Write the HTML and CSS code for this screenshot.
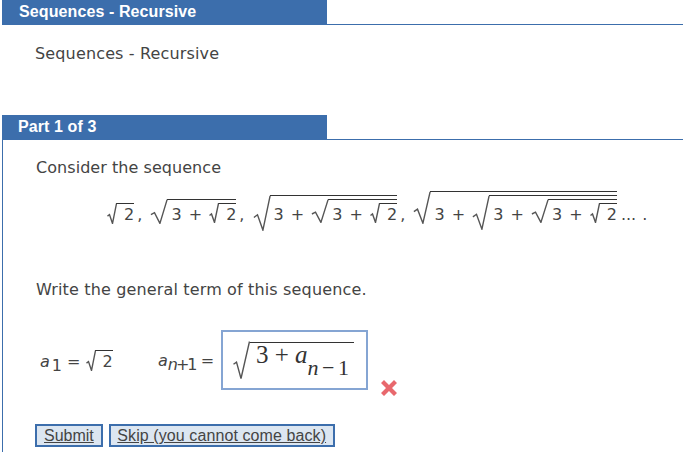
FILE: index.html
```html
<!DOCTYPE html>
<html lang="en">
<head>
    <meta charset="UTF-8">
    <title>Sequences - Recursive</title>
    <link rel="stylesheet" href="styles.css">
</head>
<body>
    <div class="tab-row"><div class="tab">Sequences - Recursive</div></div>
    <p class="intro">Sequences - Recursive</p>

    <div class="tab-row"><div class="tab tab-part">Part 1 of 3</div></div>
    <div class="part">
        <p class="prompt">Consider the sequence</p>

        <div class="sequence">
            <span class="sqrt"><svg class="surd" viewBox="0 0 10 20" preserveAspectRatio="none"><path d="M0.5 12.5 L2.5 11 L5.5 19.5 L9.5 0.5"/></svg><span class="rad">2</span></span><span class="comma">,</span>
            <span class="sqrt outer"><svg class="surd" viewBox="0 0 10 20" preserveAspectRatio="none"><path d="M0.5 12.5 L2.5 11 L5.5 19.5 L9.5 0.5"/></svg><span class="rad">3 + <span class="sqrt"><svg class="surd" viewBox="0 0 10 20" preserveAspectRatio="none"><path d="M0.5 12.5 L2.5 11 L5.5 19.5 L9.5 0.5"/></svg><span class="rad">2</span></span></span></span><span class="comma">,</span>
            <span class="sqrt outer deep"><svg class="surd" viewBox="0 0 10 20" preserveAspectRatio="none"><path d="M0.5 12.5 L2.5 11 L5.5 19.5 L9.5 0.5"/></svg><span class="rad">3 + <span class="sqrt outer"><svg class="surd" viewBox="0 0 10 20" preserveAspectRatio="none"><path d="M0.5 12.5 L2.5 11 L5.5 19.5 L9.5 0.5"/></svg><span class="rad">3 + <span class="sqrt"><svg class="surd" viewBox="0 0 10 20" preserveAspectRatio="none"><path d="M0.5 12.5 L2.5 11 L5.5 19.5 L9.5 0.5"/></svg><span class="rad">2</span></span></span></span></span></span><span class="comma">,</span>
            <span class="sqrt outer"><svg class="surd" viewBox="0 0 10 20" preserveAspectRatio="none"><path d="M0.5 12.5 L2.5 11 L5.5 19.5 L9.5 0.5"/></svg><span class="rad">3 + <span class="sqrt outer deep"><svg class="surd" viewBox="0 0 10 20" preserveAspectRatio="none"><path d="M0.5 12.5 L2.5 11 L5.5 19.5 L9.5 0.5"/></svg><span class="rad">3 + <span class="sqrt outer"><svg class="surd" viewBox="0 0 10 20" preserveAspectRatio="none"><path d="M0.5 12.5 L2.5 11 L5.5 19.5 L9.5 0.5"/></svg><span class="rad">3 + <span class="sqrt"><svg class="surd" viewBox="0 0 10 20" preserveAspectRatio="none"><path d="M0.5 12.5 L2.5 11 L5.5 19.5 L9.5 0.5"/></svg><span class="rad">2</span></span></span></span></span></span></span></span><span class="dots">... .</span>
        </div>

        <p class="prompt ask">Write the general term of this sequence.</p>

        <div class="answer-row">
            <span class="term"><i>a</i><sub>1</sub> = <span class="sqrt"><svg class="surd" viewBox="0 0 10 20" preserveAspectRatio="none"><path d="M0.5 12.5 L2.5 11 L5.5 19.5 L9.5 0.5"/></svg><span class="rad">2</span></span></span>
            <span class="term term-next"><i>a</i><sub class="sub-long"><i>n</i>+1</sub> =</span>
            <div class="answer-box">
                <span class="sqrt sqrt-big"><svg class="surd" viewBox="0 0 17 36" preserveAspectRatio="none"><path d="M0.5 22 L3.5 20 L8 35.5 L16.5 0.5"/></svg><span class="rad">3 + <i>a</i><sub><i>n</i>&#8722;1</sub></span></span>
            </div>
            <svg class="wrong" viewBox="0 0 18 18"><path d="M4 1 L9 6 L14 1 L17 4 L12 9 L17 14 L14 17 L9 12 L4 17 L1 14 L6 9 L1 4 Z"/></svg>
        </div>

        <div class="buttons">
            <button><u>Submit</u></button>
            <button class="skip"><u>Skip (you cannot come back)</u></button>
        </div>
    </div>
</body>
</html>
```

FILE: styles.css
```css
html, body {
    height: 452px;
    overflow: hidden;
}
body {
    margin: 0;
    padding-left: 2px;
    font-family: "DejaVu Sans", sans-serif;
    font-size: 16px;
    color: #444;
    background: #fff;
}
.tab-row {
    border-bottom: 1px solid #3c6eac;
}
.tab {
    width: 325px;
    height: 24px;
    box-sizing: border-box;
    padding-left: 17px;
    background: #3c6eac;
    color: #fff;
    font-family: "Liberation Sans", Arial, sans-serif;
    font-size: 16px;
    font-weight: bold;
    line-height: 23px;
    letter-spacing: 0.1px;
}
.tab-part {
    padding-left: 16px;
    line-height: 24px;
}
.intro {
    margin: 0;
    padding: 19px 0 0 33px;
    box-sizing: border-box;
    line-height: 20px;
    height: 90px;
    letter-spacing: 0.15px;
}
.part {
    border-left: 1px solid #3c6eac;
    height: 312px;
    padding-left: 33px;
}
.prompt {
    margin: 0;
    padding-top: 18px;
    line-height: 20px;
    letter-spacing: 0.05px;
}
.ask {
    padding-top: 0;
    margin-top: 39px;
    letter-spacing: 0.15px;
}

/* radicals */
.sqrt {
    position: relative;
    display: inline-block;
    padding-left: 9px;
}
.surd {
    position: absolute;
    left: 0;
    top: 0;
    width: 10px;
    height: 100%;
    fill: none;
    stroke: #555;
    stroke-width: 1.4;
}
.surd path {
    vector-effect: non-scaling-stroke;
}
.rad {
    display: inline-block;
    border-top: 1px solid #333;
    padding: 3px 0 0 8px;
    line-height: 16px;
}
.outer {
    padding-left: 17px;
}
.outer > .surd {
    width: 18px;
}
.outer > .rad {
    padding-left: 4px;
}
.deep > .surd {
    height: calc(100% + 7px);
}

.sequence {
    margin: 13px 0 0 71px;
    height: 50px;
    white-space: nowrap;
    word-spacing: 2px;
}
.comma {
    margin: 0 1px 0 3px;
}
.dots {
    margin-left: 4px;
    word-spacing: 1px;
}
.answer-row {
    display: flex;
    align-items: center;
    margin-top: 30px;
    height: 60px;
    padding-left: 4px;
}
.term {
    width: 118px;
    white-space: nowrap;
}
.term-next {
    width: 63px;
}
.term sub {
    margin-left: 2px;
    font-size: 16px;
    line-height: 0;
    vertical-align: -4px;
}
.term .sub-long {
    margin-left: 0;
    letter-spacing: -2px;
}
.answer-box {
    box-sizing: border-box;
    width: 147px;
    height: 60px;
    border: 2px solid #85a5d3;
    padding: 9px 0 0 10px;
    font-family: "Liberation Serif", serif;
    font-size: 25px;
    color: #333;
    white-space: nowrap;
}
.sqrt-big {
    padding-left: 17px;
}
.sqrt-big .surd {
    width: 17px;
}
.sqrt-big .rad {
    padding: 0 1px 11px 6px;
    line-height: 24px;
}
.answer-box sub {
    font-size: 22px;
    letter-spacing: 3.5px;
    line-height: 0;
    vertical-align: -12px;
}
.wrong {
    align-self: flex-end;
    width: 18px;
    height: 18px;
    margin: 0 0 -7px 12px;
    fill: #e8686d;
}
.buttons {
    margin: 34px 0 0 -1px;
    display: flex;
    gap: 6px;
}
button {
    height: 23px;
    padding: 0 7px;
    border: 2px solid #3c6eac;
    background: #dce6f1;
    color: #444;
    font-family: "Liberation Sans", Arial, sans-serif;
    font-size: 16px;
    line-height: 19px;
}
.skip {
    padding: 0 6.5px;
    letter-spacing: 0.09px;
}
```
